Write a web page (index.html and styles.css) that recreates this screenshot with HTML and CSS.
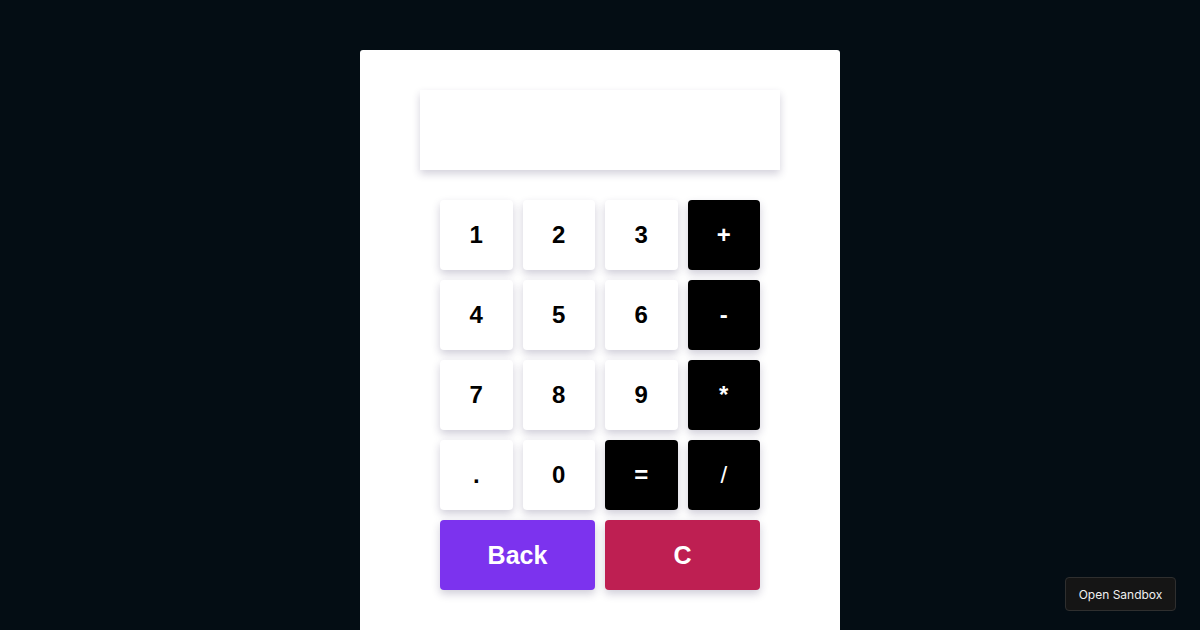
FILE: index.html
```html
<!DOCTYPE html>
<html>
<head>
<meta charset="utf-8">
<link rel="stylesheet" href="styles.css">
</head>
<body>
<div class="page">
  <div class="card">
    <div class="display"></div>
    <div class="keys">
      <button class="key">1</button>
      <button class="key">2</button>
      <button class="key">3</button>
      <button class="key op">+</button>
      <button class="key">4</button>
      <button class="key">5</button>
      <button class="key">6</button>
      <button class="key op">-</button>
      <button class="key">7</button>
      <button class="key">8</button>
      <button class="key">9</button>
      <button class="key op">*</button>
      <button class="key">.</button>
      <button class="key">0</button>
      <button class="key op">=</button>
      <button class="key op thin">/</button>
      <button class="key wide back">Back</button>
      <button class="key wide clear">C</button>
    </div>
  </div>
</div>
<button class="sandbox">Open Sandbox</button>
</body>
</html>
```
FILE: styles.css
```css
html, body {
  margin: 0;
  padding: 0;
  height: 100%;
  overflow: hidden;
}
body {
  background: #040d14;
  font-family: "Liberation Sans", Arial, sans-serif;
}
.page {
  display: flex;
  justify-content: center;
  padding-top: 50px;
}
.card {
  width: 480px;
  height: 580px;
  background: #ffffff;
  border-radius: 3px 3px 0 0;
  padding-top: 40px;
  box-sizing: border-box;
  display: flex;
  flex-direction: column;
  align-items: center;
}
.display {
  width: 360px;
  height: 80px;
  background: #ffffff;
  box-shadow: 0 4px 8px rgba(40, 30, 80, 0.2);
}
.keys {
  margin-top: 30px;
  width: 320px;
  display: grid;
  grid-template-columns: repeat(4, 1fr);
  grid-auto-rows: 70px;
  gap: 10px;
}
.key {
  border: none;
  border-radius: 4px;
  background: #ffffff;
  color: #000000;
  font-family: "Liberation Sans", Arial, sans-serif;
  font-weight: bold;
  font-size: 24px;
  padding: 0;
  box-shadow: 0 4px 8px rgba(40, 30, 80, 0.22);
}
.key.op {
  background: #000000;
  color: #ffffff;
}
.key.thin {
  font-weight: normal;
}
.key.wide {
  grid-column: span 2;
  color: #ffffff;
  font-size: 25px;
}
.back {
  background: #7c33ee;
}
.clear {
  background: #be1f52;
}
.sandbox {
  position: absolute;
  right: 24px;
  bottom: 19px;
  width: 111px;
  height: 34px;
  background: #151515;
  border: 1px solid #2f2f2f;
  border-radius: 4px;
  color: #f0f0f0;
  font-family: Inter, "Noto Sans", sans-serif;
  font-size: 12px;
  padding: 0;
}
```
